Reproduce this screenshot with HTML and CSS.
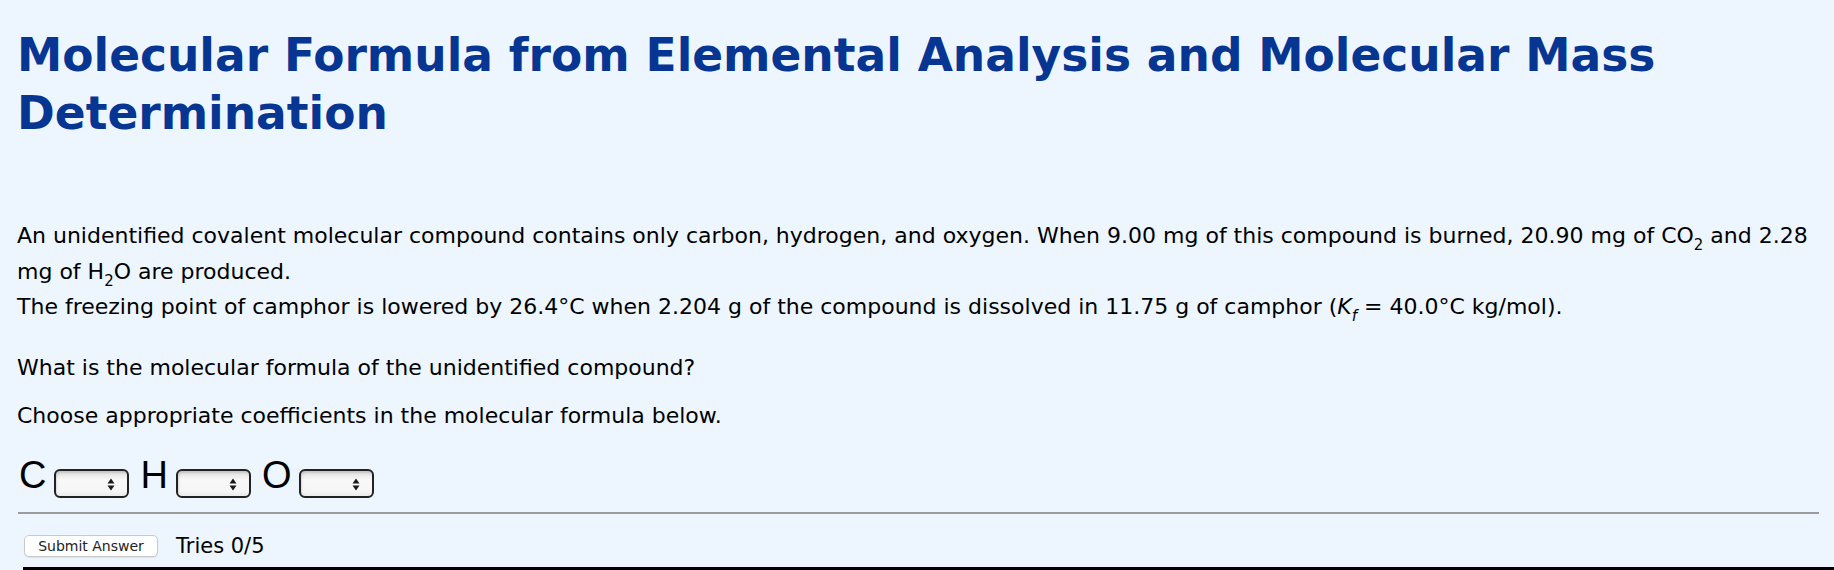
FILE: index.html
```html
<!DOCTYPE html>
<html lang="en">
<head>
<meta charset="utf-8">
<title>Molecular Formula from Elemental Analysis and Molecular Mass Determination</title>
<link rel="stylesheet" href="styles.css">
</head>
<body>
<div class="page">
  <h1 class="title">Molecular Formula from Elemental Analysis and Molecular Mass Determination</h1>
  <p class="intro">An unidentified covalent molecular compound contains only carbon, hydrogen, and oxygen. When 9.00 mg of this compound is burned, 20.90 mg of CO<sub class="sub">2</sub> and 2.28 mg of H<sub class="sub">2</sub>O are produced.</p>
  <p class="freeze">The freezing point of camphor is lowered by 26.4°C when 2.204 g of the compound is dissolved in 11.75 g of camphor (<i>K<sub class="sub">f</sub></i> = 40.0°C kg/mol).</p>
  <p class="question">What is the molecular formula of the unidentified compound?</p>
  <p class="instruct">Choose appropriate coefficients in the molecular formula below.</p>
  <div class="formula">
    <span class="el">C</span>
    <span class="sel"><svg class="arrows" width="8" height="13" viewBox="0 0 8 13"><path d="M0.5 5.5 L4 0.5 L7.5 5.5Z M0.5 7.5 L4 12.5 L7.5 7.5Z" fill="#1a1a1a"/></svg></span>
    <span class="el">H</span>
    <span class="sel"><svg class="arrows" width="8" height="13" viewBox="0 0 8 13"><path d="M0.5 5.5 L4 0.5 L7.5 5.5Z M0.5 7.5 L4 12.5 L7.5 7.5Z" fill="#1a1a1a"/></svg></span>
    <span class="el">O</span>
    <span class="sel"><svg class="arrows" width="8" height="13" viewBox="0 0 8 13"><path d="M0.5 5.5 L4 0.5 L7.5 5.5Z M0.5 7.5 L4 12.5 L7.5 7.5Z" fill="#1a1a1a"/></svg></span>
  </div>
  <hr class="rule">
  <div class="submit-row">
    <button class="submit" type="button">Submit Answer</button>
    <span class="tries">Tries 0/5</span>
  </div>
  <div class="feedback"></div>
</div>
</body>
</html>
```
FILE: styles.css
```css
html, body {
  margin: 0;
  padding: 0;
  height: 100%;
  overflow: hidden;
}
body {
  background: #edf5ff;
  color: #000;
  font-family: "DejaVu Sans", Verdana, sans-serif;
}
.page {
  display: flex;
  flex-direction: column;
  padding: 0 8px 0 17px;
}
.title {
  margin: 27px 0 0;
  font-family: "DejaVu Sans", Verdana, sans-serif;
  font-weight: bold;
  font-size: 45.5px;
  line-height: 58px;
  color: #063592;
}
.intro, .freeze, .question, .instruct {
  margin: 0;
  font-size: 22px;
}
.intro {
  margin-top: 75px;
  line-height: 36px;
}
.freeze {
  margin-top: 2px;
  line-height: 30px;
}
.question {
  margin-top: 31px;
  line-height: 30px;
}
.instruct {
  margin-top: 18px;
  line-height: 30px;
}
.sub {
  font-size: 15px;
  line-height: 0;
  vertical-align: -7px;
}
.formula {
  margin-top: 25px;
  display: flex;
  align-items: flex-start;
}
.el {
  font-family: "Liberation Sans", Arial, sans-serif;
  font-size: 38px;
  line-height: 38px;
  margin-left: 2px;
}
.sel {
  box-sizing: border-box;
  width: 75px;
  height: 29px;
  margin: 13px 9px 0 8px;
  border: 2px solid #222;
  border-radius: 6px;
  background: linear-gradient(#dedede, #f8f8f8 35%, #f6f6f6 80%, #eaeaea);
  box-shadow: inset 1px 2px 2px rgba(0, 0, 0, 0.12);
  display: flex;
  align-items: center;
  justify-content: flex-end;
  padding: 2px 12px 0 0;
}
.arrows {
  display: block;
}
.rule {
  margin: 14px 7px 0 1px;
  border: 0;
  height: 2px;
  background: #9c9c9c;
}
.submit-row {
  margin-top: 21px;
  display: flex;
  align-items: flex-start;
}
.submit {
  box-sizing: border-box;
  width: 134px;
  height: 22px;
  margin-left: 7px;
  padding: 0;
  background: #fff;
  border: 1px solid #c9c9c9;
  border-radius: 5px;
  box-shadow: 0 1px 1px rgba(0, 0, 0, 0.08);
  font-family: "DejaVu Sans", "Lucida Grande", sans-serif;
  font-size: 14px;
  color: #222;
  line-height: 20px;
}
.tries {
  margin-left: 18px;
  font-family: "DejaVu Sans", "Lucida Grande", sans-serif;
  font-size: 21px;
  line-height: 22px;
}
.feedback {
  margin: 10px -8px 0 6px;
  height: 60px;
  border-top: 3px solid #000;
}
```
